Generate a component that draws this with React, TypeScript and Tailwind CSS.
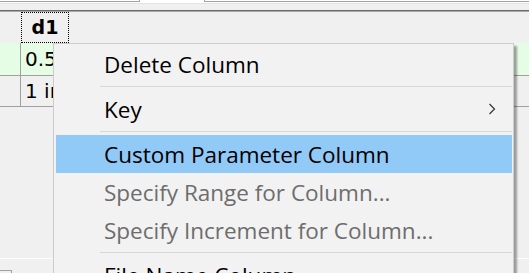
import React from "react";

const Sep = () => (
  <div className="h-[7px] flex items-center pl-[46px] pr-[1px]">
    <div className="h-px w-full bg-[#d7d7d7]" />
  </div>
);

const Item = ({
  label,
  disabled,
  active,
  arrow,
}: {
  label: string;
  disabled?: boolean;
  active?: boolean;
  arrow?: boolean;
}) => (
  <div
    className={
      "h-[38px] flex items-center pl-[48px] pr-[14px] ml-[2px] mr-[1px] " +
      (active ? "bg-[#91c9f7] " : "") +
      (disabled ? "text-[#6d6d6d]" : "text-black")
    }
  >
    <span className="flex-1 whitespace-nowrap leading-none pt-[3px]">{label}</span>
    {arrow && (
      <svg width="8" height="12" viewBox="0 0 8 12" className="mr-[2px]">
        <path d="M1.5 1 L6.5 6 L1.5 11" fill="none" stroke="#333" strokeWidth="1.2" />
      </svg>
    )}
  </div>
);

export default function App() {
  return (
    <div className="w-[529px] h-[273px] bg-[#f0f0f0] relative overflow-hidden font-['Open_Sans',sans-serif]">
      {/* top strip */}
      <div className="h-[4px] bg-white border-b border-[#e3e3e3] flex items-start">
        <div className="w-[140px] h-[2px] border-b border-r border-[#a0a0a0]" />
        <div className="w-[64px]" />
        <div className="flex-1 h-[2px] border-b border-l border-[#a0a0a0]" />
      </div>
      <div className="h-[6px]" />
      <div className="h-px bg-[#6b6b6b]" />
      <div className="h-px bg-[#a9a9a9]" />

      {/* table */}
      <div className="flex flex-col">
        <div className="h-[31px] flex">
          <div className="w-[21px]" />
          <div className="w-[48px] h-[31px] border border-dotted border-black flex items-center justify-center font-['DejaVu_Sans',sans-serif] font-bold text-[19px] text-black">
            d1
          </div>
        </div>
        <div className="h-[33px] flex bg-[#e5fce5] border-b border-[#a0a0a0]">
          <div className="w-[21px] border-r border-[#a0a0a0]" />
          <div className="flex-1 flex items-center pl-[4px] text-[20px] font-['DejaVu_Sans',sans-serif] text-black">
            0.5
          </div>
        </div>
        <div className="h-[31px] flex border-b border-[#a0a0a0]">
          <div className="w-[21px] border-r border-[#a0a0a0]" />
          <div className="flex-1 flex items-center pl-[4px] text-[20px] font-['DejaVu_Sans',sans-serif] text-black whitespace-nowrap">
            1 in
          </div>
        </div>
      </div>

      {/* bottom scrollbar area */}
      <div className="absolute left-0 right-0 top-[258px] h-px bg-white" />
      <div className="absolute left-0 right-0 top-[259px] h-[11px] bg-[#f0f0f0]" />
      <div className="absolute left-0 top-[270px] w-[12px] h-[3px] border-t border-r border-[#a0a0a0]" />

      {/* context menu */}
      <div className="absolute left-[53px] top-[43px] w-[461px] h-[260px] bg-[#f2f2f2] border border-[#cccccc] shadow-[3px_3px_2px_rgba(0,0,0,0.35)] pt-[1px] text-[22.5px]">
        <Item label="Delete Column" />
        <Sep />
        <Item label="Key" arrow />
        <Sep />
        <Item label="Custom Parameter Column" active />
        <Item label="Specify Range for Column..." disabled />
        <Item label="Specify Increment for Column..." disabled />
        <Sep />
        <Item label="File Name Column" />
      </div>
    </div>
  );
}
